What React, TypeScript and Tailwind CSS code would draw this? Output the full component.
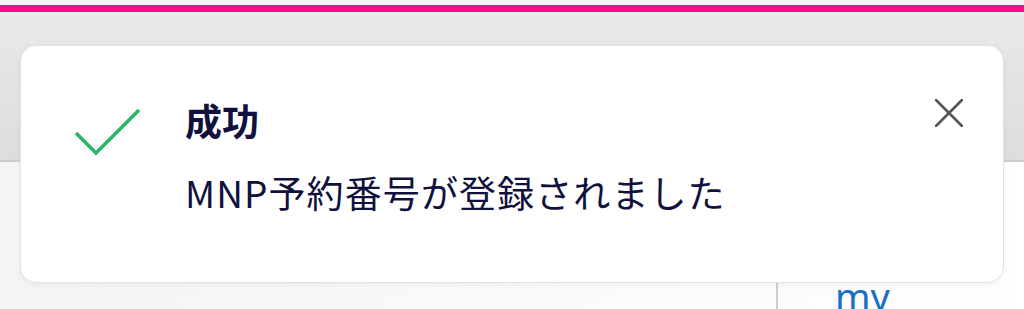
import React from 'react';

const CheckIcon: React.FC = () => (
  <svg width="70" height="52" viewBox="0 0 70 52" fill="none" className="block">
    <path d="M3 27 L23 47 L66 4" stroke="#2bb564" strokeWidth={3.6} strokeLinecap="butt" strokeLinejoin="miter" />
  </svg>
);

const CloseIcon: React.FC = () => (
  <svg width="28" height="28" viewBox="0 0 28 28" fill="none" className="block">
    <path d="M1 1 L27 27 M27 1 L1 27" stroke="#555555" strokeWidth={2.6} strokeLinecap="round" />
  </svg>
);

const Toast: React.FC = () => (
  <div className="absolute left-[20px] top-[45px] w-[984px] h-[238px] rounded-[16px] border border-[#e3e1ef] bg-white shadow-[0_2px_6px_rgba(0,0,0,0.05)]">
    <div className="flex items-start pl-[52px]">
      <div className="pt-[60px]">
        <CheckIcon />
      </div>
      <div className="pl-[42px] pt-[49px] text-[#11113d]">
        <p className="text-[37px] leading-[51px] font-bold">成功</p>
        <p className="mt-[21px] text-[37px] leading-[51px] font-normal tracking-[1.1px]">MNP予約番号が登録されました</p>
      </div>
    </div>
    <button className="absolute right-[40px] top-[53px] p-0" aria-label="close">
      <CloseIcon />
    </button>
  </div>
);

export default function App() {
  return (
    <div
      className="relative w-full h-[309px] overflow-hidden bg-white"
      style={{ fontFamily: '"Noto Sans CJK JP", "Noto Sans", sans-serif' }}
    >
      <div className="h-[5px] bg-[#f3f3f3]" />
      <div className="h-[7px] bg-[#ff0a8c]" />
      <div className="h-[150px] bg-gradient-to-b from-[#e9e9e9] to-[#dddddd] border-b-2 border-[#cdcdcd]" />
      <div className="flex h-[147px] bg-gradient-to-r from-[#f4f4f4] to-white">
        <div className="w-[778px] border-r-2 border-[#cccccc]" />
        <div className="pl-[57px] pt-[114px]">
          <span className="text-[#1a70c2] text-[38px] leading-[40px]" style={{ fontFamily: '"Noto Sans", sans-serif' }}>my</span>
        </div>
      </div>
      <Toast />
    </div>
  );
}
